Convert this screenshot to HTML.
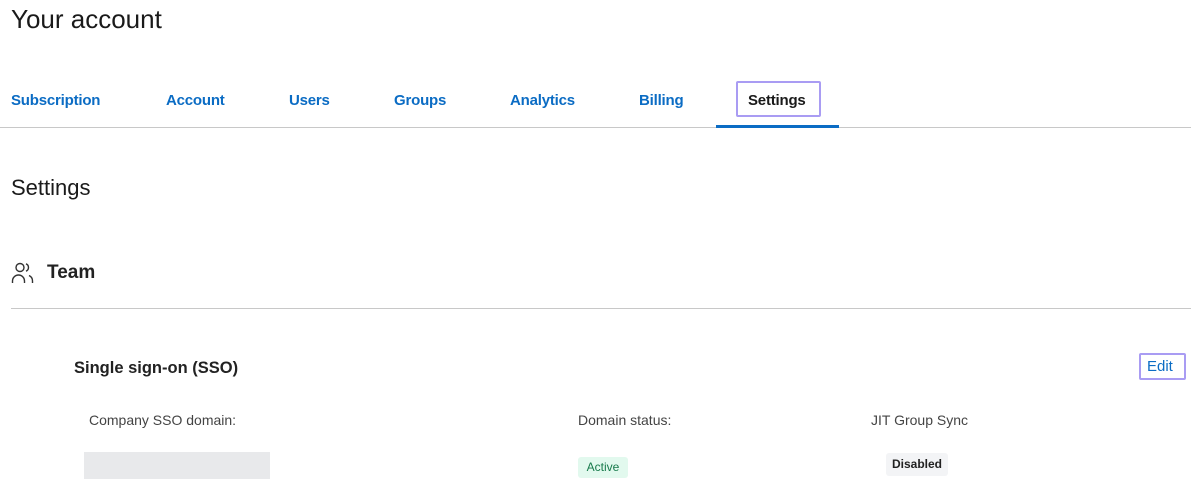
<!DOCTYPE html>
<html><head><style>
body{margin:0;width:1191px;height:503px;background:#fff;font-family:"Liberation Sans",sans-serif;position:relative;overflow:hidden;color:#1a1a1a}
.a{position:absolute;white-space:nowrap}
.tab{position:absolute;top:91px;font-size:15px;color:#0b6cc4;font-weight:bold;letter-spacing:-0.2px;line-height:20px}
.lbl{position:absolute;top:411px;font-size:14px;color:#444;line-height:18px}
</style></head><body>
<div class="a" style="left:11px;top:3px;font-size:26px;line-height:32px;color:#1a1a1a">Your account</div>
<div class="tab" style="left:11px">Subscription</div>
<div class="tab" style="left:166px">Account</div>
<div class="tab" style="left:289px">Users</div>
<div class="tab" style="left:394px">Groups</div>
<div class="tab" style="left:510px">Analytics</div>
<div class="tab" style="left:639px">Billing</div>
<div class="a" style="left:736px;top:81px;width:81px;height:32px;border:2px solid #a99cf3;border-radius:2px"></div>
<div class="tab" style="left:748px;color:#1a1a1a">Settings</div>
<div class="a" style="left:0;top:127px;width:1191px;height:1px;background:#c8c8c8"></div>
<div class="a" style="left:716px;top:125px;width:123px;height:3px;background:#0b6cc4"></div>
<div class="a" style="left:11px;top:174px;font-size:22px;line-height:28px">Settings</div>
<svg class="a" style="left:11px;top:262px" width="24" height="22" viewBox="0 0 24 22" fill="none" stroke="#333" stroke-width="1.4">
<circle cx="9" cy="5.5" r="4"/><path d="M1.5 21v-2a6 6 0 0 1 12 0v2"/><path d="M15 1.8a4 4 0 0 1 0 7.4"/><path d="M18 13.5a6 6 0 0 1 3.5 5.5v2"/></svg>
<div class="a" style="left:47px;top:261px;font-size:19px;font-weight:bold;line-height:24px;color:#222">Team</div>
<div class="a" style="left:11px;top:308px;width:1180px;height:1px;background:#c8c8c8"></div>
<div class="a" style="left:74px;top:357px;font-size:16.5px;font-weight:bold;line-height:22px;color:#222">Single sign-on (SSO)</div>
<div class="a" style="left:1139px;top:353px;width:43px;height:23px;border:2px solid #a99cf3;border-radius:2px"></div>
<div class="a" style="left:1147px;top:357px;font-size:15px;color:#0b6cc4;line-height:20px">Edit</div>
<div class="lbl" style="left:89px">Company SSO domain:</div>
<div class="lbl" style="left:578px">Domain status:</div>
<div class="lbl" style="left:871px">JIT Group Sync</div>
<div class="a" style="left:84px;top:452px;width:186px;height:27px;background:#e8e9eb"></div>
<div class="a" style="left:578px;top:457px;width:50px;height:21px;background:#e2f9ee;border-radius:3px;color:#177a4b;font-size:12px;line-height:21px;text-align:center">Active</div>
<div class="a" style="left:886px;top:453px;width:62px;height:23px;background:#f3f4f6;border-radius:3px;color:#222;font-size:12px;font-weight:bold;line-height:23px;text-align:center">Disabled</div>
</body></html>
